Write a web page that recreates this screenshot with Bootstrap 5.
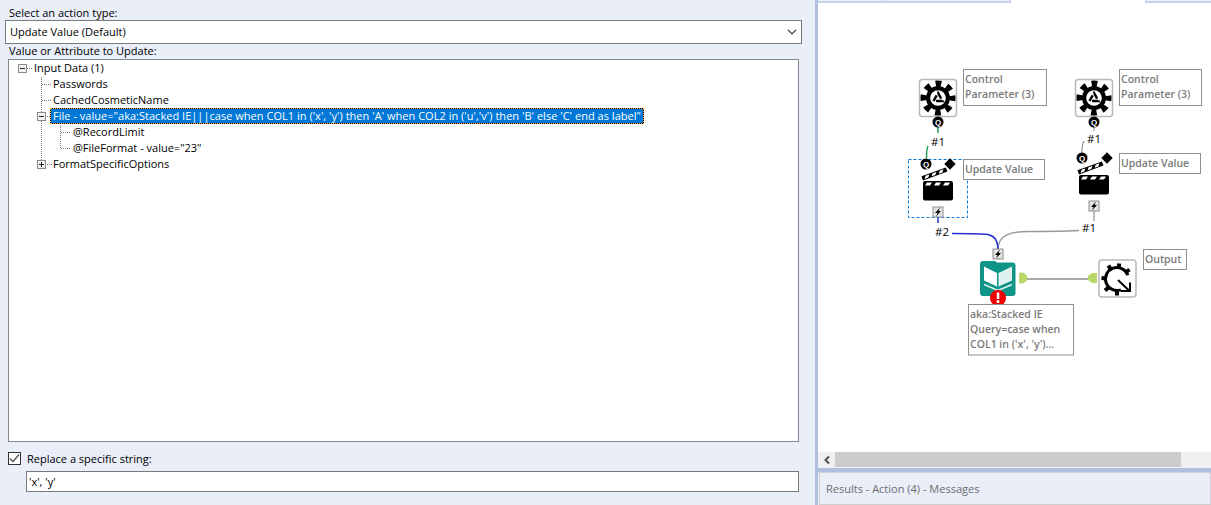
<!DOCTYPE html>
<html lang="en">
<head>
<meta charset="utf-8">
<title>Action configuration</title>
<link href="https://cdn.jsdelivr.net/npm/bootstrap@5.3.0/dist/css/bootstrap.min.css" rel="stylesheet">
<style>
html,body{height:505px;overflow:hidden;margin:0}
body{font-family:"Open Sans","Noto Sans",sans-serif;font-size:11px;color:#000;background:#e9eef9}
.cfg-pane{width:815px;background:#e9eef9;padding-top:6px}
.split-v{width:3px;background:#b0c0de}
.work-pane{width:393px}
.cap{height:14px;line-height:14px;margin:0 0 0 9px;display:block}
.act-select.form-select{width:797px;height:24px;margin-left:5px;padding:0 20px 0 4px;font-size:11px;border:1px solid #7a7a7a;border-radius:0;color:#000;line-height:22px;background-position:right 3px center;background-size:12px 10px}
.tree-box{width:791px;height:383px;margin-left:8px;margin-top:1px;background:#fff;border:1px solid #828790;position:relative;padding-top:0}
.tree-lines{position:absolute;left:-9px;top:-60px;pointer-events:none}
.tree-list,.tree-list ul{list-style:none;margin:0;padding:0}
.tree-list{padding-left:22px}
.tree-list ul{padding-left:19px}
.tree-list ul ul{padding-left:20px}
.node{display:block;width:max-content;height:16px;line-height:14px;padding:0 2px;border:1px solid transparent;white-space:nowrap}
.node-sel{color:#fff;letter-spacing:.025px;border:1px dotted #ffa21f;background:linear-gradient(#0078d7,#0078d7) padding-box,#000 border-box}
.chk-row{height:29px;padding-left:8px;padding-top:4px;gap:6px}
.chk-row .form-check-input{width:13px;height:13px;margin:0;border:1px solid #333;border-radius:0;background-color:#fff;flex:none}
.chk-row .form-check-input:checked{background-color:#fff;border-color:#333;background-image:url("data:image/svg+xml,%3csvg xmlns='http://www.w3.org/2000/svg' viewBox='0 0 13 13'%3e%3cpath fill='none' stroke='%23555' stroke-width='1.4' d='M2 6.500l3 3 6-7'/%3e%3c/svg%3e");background-size:13px 13px}
.chk-row label{line-height:14px}
.str-input.form-control{width:773px;height:21px;margin-left:26px;padding:0 2px;min-height:0;font-size:11px;border:1px solid #7a7a7a;border-radius:0;color:#000}
.tab-strip{height:3px;background:#fff;flex:none}
.tab-a{width:64px;background:#e9eef9;border-bottom:2px solid #c5d2ea;border-right:1px solid #c5d2ea}
.tab-b{width:129px;background:#e9eef9;border-bottom:2px solid #c5d2ea;border-right:1px solid #c5d2ea}
.tab-gap{width:134px}
.tab-c{flex:1;background:#e9eef9;border-bottom:2px solid #c5d2ea;border-left:1px solid #c5d2ea}
.canvas-area{height:449px;background:#fff;flex:none}
.canvas-area svg{display:block}
.hbar{height:16px;background:#f0f0f0;flex:none}
.hbar-arrow{width:17px;color:#505050}
.hbar-thumb{width:346px;background:#cdcdcd;height:15px}
.split-h{height:4px;background:#b0c0de;flex:none}
.res-bar{height:33px;flex:none;background:#e9eef9;border:1px solid #cfcfcf;margin-left:1px;padding-left:6px;color:#6d6d6d;line-height:31px}
.ann{font-family:"Open Sans","Noto Sans",sans-serif;font-size:10.5px;font-weight:600;fill:#7b7b7b}
.ann-box{fill:#fff;stroke:#8f8f8f}
.tool-box{fill:#fff;stroke:#b9b9b9;stroke-width:1.5}
.conn-tag{font-family:"Open Sans","Noto Sans",sans-serif;font-size:11.5px;fill:#000}
.q-glyph{font-family:"Liberation Sans",sans-serif;font-size:8px;font-weight:700;fill:#fff;text-anchor:middle}
</style>
</head>
<body>
<div class="d-flex" style="height:505px">
  <main class="cfg-pane d-flex flex-column flex-shrink-0">
    <label class="cap" for="actType">Select an action type:</label>
    <select id="actType" class="form-select act-select"><option>Update Value (Default)</option></select>
    <div class="cap">Value or Attribute to Update:</div>
    <div class="tree-box">
      <svg class="tree-lines" width="120" height="180" viewBox="0 0 120 180" shape-rendering="crispEdges">
        <g fill="none" stroke="#777" stroke-dasharray="1 1">
          <path d="M27 68.500h6M41.500 77v84M42 84.500h9M42 100.500h9M47 116.500h3M60.500 125v24M61 132.500h9M61 148.500h9M47 164.500h5"/>
        </g>
        <g fill="#f4f4f4" stroke="#8a8a8a">
          <rect x="18.500" y="64.500" width="8" height="8"/>
          <rect x="37.500" y="112.500" width="8" height="8"/>
          <rect x="37.500" y="160.500" width="8" height="8"/>
        </g>
        <path d="M20 68.500h5M39 116.500h5M39 164.500h5M41.500 162v5" stroke="#222" fill="none"/>
      </svg>
      <ul class="tree-list">
        <li><span class="node">Input Data (1)</span>
          <ul>
            <li><span class="node">Passwords</span></li>
            <li><span class="node">CachedCosmeticName</span></li>
            <li><span class="node node-sel">File - value="aka:Stacked IE|||case when COL1 in ('x', 'y') then 'A' when COL2 in ('u','v') then 'B' else 'C' end as label"</span>
              <ul>
                <li><span class="node">@RecordLimit</span></li>
                <li><span class="node">@FileFormat - value="23"</span></li>
              </ul>
            </li>
            <li><span class="node">FormatSpecificOptions</span></li>
          </ul>
        </li>
      </ul>
    </div>
    <div class="chk-row d-flex align-items-center">
      <input class="form-check-input" type="checkbox" id="repl" checked>
      <label for="repl">Replace a specific string:</label>
    </div>
    <input class="form-control str-input" type="text" value="'x', 'y'" aria-label="Replacement string">
  </main>
  <div class="split-v flex-shrink-0"></div>
  <section class="work-pane d-flex flex-column flex-shrink-0">
    <div class="tab-strip d-flex"><div class="tab-a"></div><div class="tab-b"></div><div class="tab-gap"></div><div class="tab-c"></div></div>
    <div class="canvas-area">
      <svg width="393" height="449" viewBox="818 3 393 449">
        <defs>
          <g id="gearTool">
            <circle r="12" fill="#000"/>
            <circle r="14.500" fill="none" stroke="#000" stroke-width="6" stroke-dasharray="5.694 5.694" stroke-dashoffset="2.847"/>
            <circle r="7.800" fill="#fff"/>
            <path d="M0-5L4.500 3H-4.500Z" fill="none" stroke="#000" stroke-width="2.400" stroke-dasharray="6.500 2.600"/>
          </g>
          <g id="qBadge">
            <circle r="5.500" fill="#000"/>
            <text y="2.900" class="q-glyph">Q</text>
          </g>
          <g id="boltBadge">
            <rect x="-5" y="-5" width="10" height="10" fill="#e4e4e4" stroke="#8f8f8f"/>
            <path d="M2-4.500L-3 1h2.500L-2 4.500 3-1H.5z" fill="#000"/>
          </g>
          <g id="clapper">
            <rect x="2" y="16" width="30" height="19.500" rx="2" fill="#000"/>
            <path d="M6 17.500h5l-2 3h-5zM15 17.500h5l-2 3h-5zM24 17.500h5l-2 3h-5z" fill="#fff"/>
            <g transform="rotate(-20 2 15.500)">
              <rect x="2" y="11" width="26" height="4.500" fill="#000"/>
              <path d="M6 12h4l-2 2.500h-4zM13.500 12h4l-2 2.500h-4zM21 12h4l-2 2.500h-4z" fill="#fff"/>
            </g>
          </g>
        </defs>

        <!-- connections -->
        <g fill="none" stroke-width="1.500">
          <path d="M938 127v6" stroke="#1fa05a"/>
          <path d="M926.500 158c0-5 0-9 1.500-12" stroke="#1fa05a"/>
          <path d="M1094 127v4" stroke="#b5b5b5"/>
          <path d="M1082 153c0-5 0-9 2-12" stroke="#777" stroke-width="1"/>
          <path d="M1094 211v10" stroke="#aaa"/>
          <path d="M1079 230.500c-20 1-36 1-50 1-18 0-31 3-31 18" stroke="#999"/>
          <path d="M952 233.500c16 0 30 0 36 1 7 1.500 10 7 10 15" stroke="#2530d0"/>
          <path d="M938 218v5" stroke="#2530d0"/>
          <path d="M1027 279h62" stroke="#aaa" stroke-width="2"/>
        </g>
        <text class="conn-tag" x="931" y="146">#1</text>
        <text class="conn-tag" x="1087" y="143">#1</text>
        <text class="conn-tag" x="935" y="236">#2</text>
        <text class="conn-tag" x="1082" y="232">#1</text>

        <!-- control parameter 1 -->
        <rect class="tool-box" x="919.500" y="79.500" width="37" height="37" rx="3"/>
        <use href="#gearTool" x="938" y="98"/>
        <use href="#qBadge" x="938" y="122"/>
        <rect class="ann-box" x="963.500" y="69.500" width="83" height="36"/>
        <text class="ann" x="965" y="83">Control</text>
        <text class="ann" x="965" y="98">Parameter (3)</text>

        <!-- control parameter 2 -->
        <rect class="tool-box" x="1075.500" y="79.500" width="37" height="37" rx="3"/>
        <use href="#gearTool" x="1094" y="98"/>
        <use href="#qBadge" x="1094" y="122"/>
        <rect class="ann-box" x="1119.500" y="69.500" width="82" height="36"/>
        <text class="ann" x="1121" y="83">Control</text>
        <text class="ann" x="1121" y="98">Parameter (3)</text>

        <!-- update value 1 -->
        <rect x="908.500" y="159.500" width="59" height="58" fill="none" stroke="#0a78d7" stroke-dasharray="3 2"/>
        <use href="#qBadge" x="926" y="164"/>
        <rect x="946" y="160" width="8" height="8" fill="#000" transform="rotate(45 950 164)"/>
        <use href="#clapper" x="921" y="165"/>
        <use href="#boltBadge" x="938" y="212"/>
        <rect class="ann-box" x="963.500" y="159.500" width="81" height="20"/>
        <text class="ann" x="965" y="173">Update Value</text>

        <!-- update value 2 -->
        <use href="#qBadge" x="1082" y="158"/>
        <rect x="1103" y="154" width="8" height="8" fill="#000" transform="rotate(45 1107 158)"/>
        <use href="#clapper" x="1077" y="159"/>
        <use href="#boltBadge" x="1094" y="206"/>
        <rect class="ann-box" x="1119.500" y="153.500" width="81" height="20"/>
        <text class="ann" x="1121" y="167">Update Value</text>

        <!-- input tool -->
        <use href="#boltBadge" x="998" y="254"/>
        <path d="M983 261h12l2 1.500h15.500a3 3 0 0 1 3 3V293a3 3 0 0 1-3 3H983a3 3 0 0 1-3-3V264a3 3 0 0 1 3-3z" fill="#0f9488"/>
        <path d="M984 266.500l13 6.500v13.500l-13-6z" fill="#fff"/>
        <path d="M1012 266.500l-13.500 6.500v13.500l13.500-6z" fill="#dff2ef"/>
        <path d="M984 284.500l14 6 14-6" fill="none" stroke="#dff2ef" stroke-width="1.500"/>
        <circle cx="998" cy="298" r="8" fill="#f00000"/>
        <rect x="996.800" y="292.500" width="2.500" height="6.500" fill="#fff"/>
        <circle cx="998" cy="301.500" r="1.500" fill="#fff"/>
        <rect class="ann-box" x="968.500" y="304.500" width="105" height="50.500"/>
        <text class="ann" x="970" y="318">aka:Stacked IE</text>
        <text class="ann" x="970" y="333">Query=case when</text>
        <text class="ann" x="970" y="348">COL1 in ('x', 'y')...</text>

        <!-- anchors -->
        <path d="M1019.500 273h4l3.500 3v4l-3.500 3h-4z" fill="#b9d868" stroke="#a5c455" stroke-width=".5"/>
        <path d="M1088 276l4-3h5v10h-5l-4-3z" fill="#b9d868"/>

        <!-- output tool -->
        <rect class="tool-box" x="1099" y="260" width="37" height="37" rx="3"/>
        <g fill="none" stroke="#000">
          <circle cx="1117" cy="279" r="11.500" stroke-width="3" stroke-dasharray="54 18.300" transform="rotate(70 1117 279)"/>
          <path d="M1118.500 268.500l.8-5M1111 270l-2.500-4.500M1125.500 272.500l4-3M1106 278.500l-4.500-.5M1108.500 287.500l-3.500 3M1117 290.500v5" stroke-width="4"/>
          <path d="M1118 280l11 10.500" stroke-width="2"/>
          <path d="M1121 291h9v-8.500" stroke-width="2"/>
        </g>
        <rect class="ann-box" x="1143.500" y="249.500" width="43" height="20"/>
        <text class="ann" x="1145" y="263">Output</text>
      </svg>
    </div>
    <div class="hbar d-flex">
      <div class="hbar-arrow d-flex align-items-center justify-content-center"><svg width="8" height="10" viewBox="0 0 8 10"><path d="M6 1.500L2.500 5 6 8.500" fill="none" stroke="currentColor" stroke-width="2"/></svg></div>
      <div class="hbar-thumb"></div>
    </div>
    <div class="split-h"></div>
    <div class="res-bar">Results - Action (4) - Messages</div>
  </section>
</div>
<script src="https://cdn.jsdelivr.net/npm/bootstrap@5.3.0/dist/js/bootstrap.bundle.min.js"></script>
</body>
</html>
